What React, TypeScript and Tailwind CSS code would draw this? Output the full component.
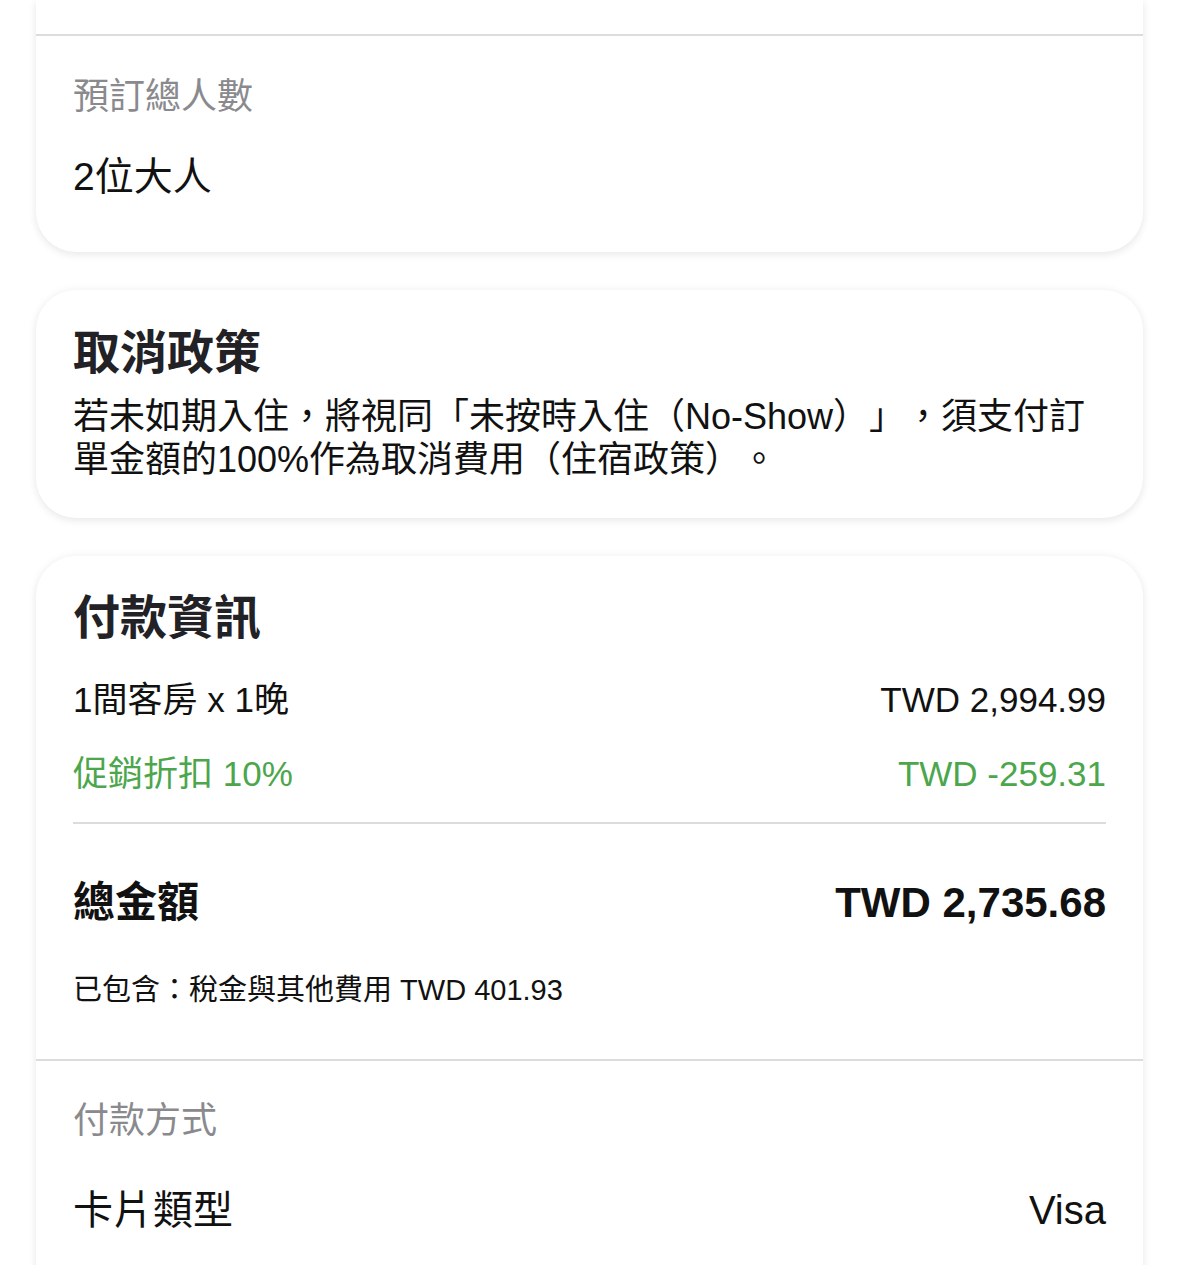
const font = { fontFamily: '"Liberation Sans", "Noto Sans CJK TC", sans-serif' };

function Row({ left, right, className }: { left: string; right: string; className: string }) {
  return (
    <div className={`flex items-center justify-between ${className}`}>
      <span>{left}</span>
      <span>{right}</span>
    </div>
  );
}

export default function App() {
  return (
    <div className="min-h-screen bg-white pb-10 text-[#111] [text-spacing-trim:space-all]" style={font}>
      <div className="mx-[36px] flex flex-col gap-[38px]">
        {/* guests card, top part cut off */}
        <section className="rounded-b-[40px] bg-white shadow-[0_0_10px_rgba(0,0,0,0.06),0_4px_8px_rgba(0,0,0,0.05)]">
          <div className="h-[36px] border-b-2 border-[#dcdcdf]" />
          <div className="px-[37px] pt-[39px] pb-[52px]">
            <p className="text-[36px] leading-[43px] text-[#8a8a8e]">預訂總人數</p>
            <p className="mt-[35px] text-[39px] leading-[47px]">2位大人</p>
          </div>
        </section>

        {/* cancellation */}
        <section className="rounded-[40px] bg-white px-[37px] pt-[35px] pb-[37px] shadow-[0_0_10px_rgba(0,0,0,0.06),0_4px_8px_rgba(0,0,0,0.05)]">
          <h2 className="text-[47px] font-bold leading-[55px] text-[#222226]">取消政策</h2>
          <p className="mt-[15px] text-[36px] leading-[43px] text-[#111]">
            若未如期入住，將視同「未按時入住（No-Show）」，須支付訂
            <br />
            單金額的100%作為取消費用（住宿政策）。
          </p>
        </section>

        {/* payment */}
        <section className="rounded-t-[40px] bg-white shadow-[0_0_10px_rgba(0,0,0,0.06),0_4px_8px_rgba(0,0,0,0.05)]">
          <div className="px-[37px] pt-[34px] pb-[51px]">
            <h2 className="text-[47px] font-bold leading-[55px] text-[#222226]">付款資訊</h2>
            <Row left="1間客房 x 1晚" right="TWD 2,994.99" className="mt-[34px] text-[35px] leading-[42px]" />
            <Row left="促銷折扣 10%" right="TWD -259.31" className="mt-[32px] text-[35px] leading-[42px] text-[#4ca64c]" />
            <div className="mt-[27px] h-[2px] bg-[#dcdcdf]" />
            <Row left="總金額" right="TWD 2,735.68" className="mt-[54px] text-[42px] font-bold leading-[49px]" />
            <p className="mt-[46px] text-[29px] leading-[35px]">已包含：稅金與其他費用 TWD 401.93</p>
          </div>
          <div className="h-[2px] bg-[#dcdcdf]" />
          <div className="px-[37px] pt-[38px] pb-[60px]">
            <p className="text-[36px] leading-[43px] text-[#8a8a8e]">付款方式</p>
            <Row left="卡片類型" right="Visa" className="mt-[44px] text-[40px] leading-[48px]" />
          </div>
        </section>
      </div>
    </div>
  );
}
